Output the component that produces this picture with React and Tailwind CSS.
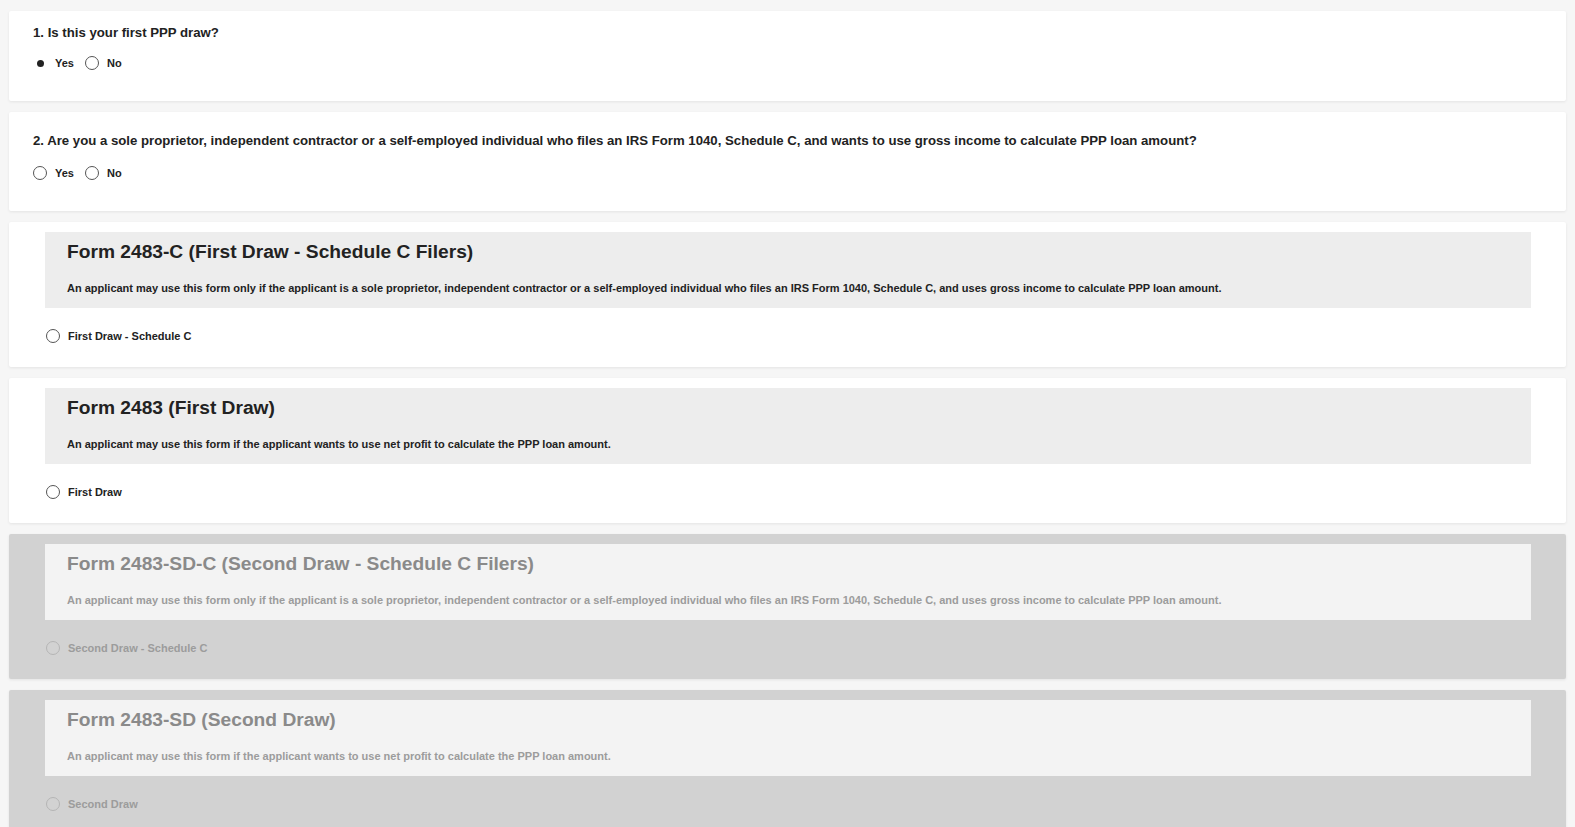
import React from "react";

const font = { fontFamily: '"Liberation Sans", Arial, sans-serif' };

function Dot() {
  return (
    <span className="flex h-[14px] w-[14px] shrink-0 items-center justify-center">
      <span className="h-[7px] w-[7px] rounded-full bg-[#222]" />
    </span>
  );
}

function Circle({ disabled }) {
  return (
    <span
      className={
        "block h-[14px] w-[14px] shrink-0 rounded-full border " +
        (disabled ? "border-[#b5b5b5]" : "border-[#555]")
      }
    />
  );
}

function QuestionCard({ text, selected, long }) {
  return (
    <div
      className={
        "rounded-[2px] bg-white px-[24px] shadow-[0_1px_3px_rgba(0,0,0,0.08)] " +
        (long ? "h-[99px] pt-[21px]" : "h-[90px] pt-[14px]")
      }
    >
      <div className="text-[13.2px] font-bold leading-[16px] text-[#222]">{text}</div>
      <div
        className={
          "flex items-center text-[11px] font-bold leading-[14px] text-[#222] " +
          (long ? "mt-[17px]" : "mt-[15px]")
        }
      >
        {selected === "yes" ? <Dot /> : <Circle />}
        <span className="ml-[8px]">Yes</span>
        <span className="ml-[11px] flex">
          <Circle />
        </span>
        <span className="ml-[8px]">No</span>
      </div>
    </div>
  );
}

function FormCard({ title, desc, label, disabled }) {
  return (
    <div
      className={
        "h-[145px] shrink-0 rounded-[2px] pl-[36px] pr-[35px] pt-[10px] shadow-[0_1px_3px_rgba(0,0,0,0.08)] " +
        (disabled ? "bg-[#d2d2d2]" : "bg-white")
      }
    >
      <div
        className={
          "h-[76px] pl-[22px] pt-[8px] " + (disabled ? "bg-[#f3f3f3]" : "bg-[#ededed]")
        }
      >
        <div
          className={
            "text-[19.2px] font-bold leading-[24px] " + (disabled ? "text-[#8a8a8a]" : "text-[#222]")
          }
        >
          {title}
        </div>
        <div
          className={
            "mt-[17px] text-[11px] font-bold leading-[14px] " +
            (disabled ? "text-[#9c9c9c]" : "text-[#222]")
          }
        >
          {desc}
        </div>
      </div>
      <div
        className={
          "mt-[21px] flex items-center pl-[1px] text-[11px] font-bold leading-[14px] " +
          (disabled ? "text-[#9c9c9c]" : "text-[#222]")
        }
      >
        <Circle disabled={disabled} />
        <span className="ml-[8px]">{label}</span>
      </div>
    </div>
  );
}

export default function App() {
  const descC =
    "An applicant may use this form only if the applicant is a sole proprietor, independent contractor or a self-employed individual who files an IRS Form 1040, Schedule C, and uses gross income to calculate PPP loan amount.";
  const descN =
    "An applicant may use this form if the applicant wants to use net profit to calculate the PPP loan amount.";
  return (
    <div className="h-[827px] overflow-hidden bg-[#f6f6f6] pl-[9px] pr-[9px] pt-[11px]" style={font}>
      <div className="flex flex-col gap-[11px]">
        <QuestionCard text="1. Is this your first PPP draw?" selected="yes" />
        <QuestionCard
          long
          text="2. Are you a sole proprietor, independent contractor or a self-employed individual who files an IRS Form 1040, Schedule C, and wants to use gross income to calculate PPP loan amount?"
        />
        <FormCard title="Form 2483-C (First Draw - Schedule C Filers)" desc={descC} label="First Draw - Schedule C" />
        <FormCard title="Form 2483 (First Draw)" desc={descN} label="First Draw" />
        <FormCard
          title="Form 2483-SD-C (Second Draw - Schedule C Filers)"
          desc={descC}
          label="Second Draw - Schedule C"
          disabled
        />
        <FormCard title="Form 2483-SD (Second Draw)" desc={descN} label="Second Draw" disabled />
      </div>
    </div>
  );
}
